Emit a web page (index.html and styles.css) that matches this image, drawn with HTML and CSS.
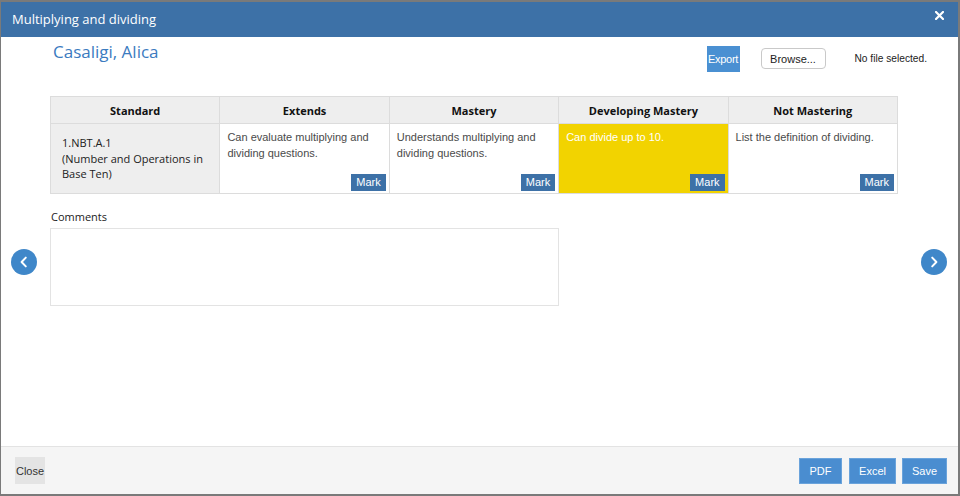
FILE: index.html
```html
<!DOCTYPE html>
<html lang="en">
<head>
<meta charset="utf-8">
<title>Multiplying and dividing</title>
<link rel="stylesheet" href="styles.css">
</head>
<body>
<div class="modal">
  <div class="modal-header">
    <span class="modal-title">Multiplying and dividing</span>
    <button class="close-x" aria-label="Close">
      <svg width="9" height="9" viewBox="0 0 9 9"><path d="M1 1 L8 8 M8 1 L1 8" stroke="#fff" stroke-width="2.2" stroke-linecap="square"/></svg>
    </button>
  </div>
  <div class="modal-body">
    <div class="top-row">
      <div class="student-name">Casaligi, Alica</div>
      <div class="spacer"></div>
      <button class="btn-export">Export</button>
      <button class="btn-browse">Browse...</button>
      <span class="file-label">No file selected.</span>
    </div>
    <table class="rubric">
      <thead>
        <tr>
          <th>Standard</th>
          <th>Extends</th>
          <th>Mastery</th>
          <th>Developing Mastery</th>
          <th>Not Mastering</th>
        </tr>
      </thead>
      <tbody>
        <tr>
          <td class="std-cell">1.NBT.A.1<br>(Number and Operations in<br>Base Ten)</td>
          <td class="level-cell"><div class="cell-inner"><span class="cell-text">Can evaluate multiplying and dividing questions.</span><button class="btn-mark">Mark</button></div></td>
          <td class="level-cell"><div class="cell-inner"><span class="cell-text">Understands multiplying and dividing questions.</span><button class="btn-mark">Mark</button></div></td>
          <td class="level-cell selected"><div class="cell-inner"><span class="cell-text">Can divide up to 10.</span><button class="btn-mark">Mark</button></div></td>
          <td class="level-cell"><div class="cell-inner"><span class="cell-text">List the definition of dividing.</span><button class="btn-mark">Mark</button></div></td>
        </tr>
      </tbody>
    </table>
    <div class="comments-label">Comments</div>
    <textarea class="comments-box"></textarea>
    <button class="nav-arrow nav-prev" aria-label="Previous">
      <svg width="26" height="26" viewBox="0 0 26 26"><circle cx="13" cy="13" r="13" fill="#3f87c9"/><path d="M14.8 8.6 L10.6 13 L14.8 17.4" fill="none" stroke="#fff" stroke-width="2" stroke-linecap="round" stroke-linejoin="round"/></svg>
    </button>
    <button class="nav-arrow nav-next" aria-label="Next">
      <svg width="26" height="26" viewBox="0 0 26 26"><circle cx="13" cy="13" r="13" fill="#3f87c9"/><path d="M11.2 8.6 L15.4 13 L11.2 17.4" fill="none" stroke="#fff" stroke-width="2" stroke-linecap="round" stroke-linejoin="round"/></svg>
    </button>
  </div>
  <div class="modal-footer">
    <button class="btn-close">Close</button>
    <div class="spacer"></div>
    <button class="btn-blue btn-pdf">PDF</button>
    <button class="btn-blue btn-excel">Excel</button>
    <button class="btn-blue btn-save">Save</button>
  </div>
</div>
</body>
</html>
```
FILE: styles.css
```css
html, body {
  margin: 0;
  padding: 0;
}
body {
  width: 960px;
  height: 496px;
  overflow: hidden;
  background: #7a7a7a;
  font-family: "Liberation Sans", Arial, sans-serif;
}
button {
  font-family: "Liberation Sans", Arial, sans-serif;
  cursor: pointer;
}
.modal {
  margin: 2px 2px 0 1px;
  height: 492px;
  background: #fff;
  display: flex;
  flex-direction: column;
}
.modal-header {
  height: 35px;
  flex: none;
  background: #3d71a7;
  display: flex;
  align-items: center;
  justify-content: space-between;
  padding: 0 14px 0 11px;
}
.modal-title {
  font-family: "Open Sans", sans-serif;
  font-size: 13px;
  color: #fff;
  margin-top: -2px;
}
.close-x {
  border: 0;
  background: none;
  padding: 0;
  width: 9px;
  height: 9px;
  align-self: flex-start;
  margin-top: 9px;
  display: flex;
}
.modal-body {
  flex: 1;
  position: relative;
  padding: 0 60px 0 49px;
}
.top-row {
  display: flex;
  align-items: flex-start;
  height: 59px;
  margin-right: -29px;
}
.spacer {
  flex: 1;
}
.student-name {
  font-family: "Open Sans", sans-serif;
  font-size: 17px;
  line-height: 22px;
  color: #3b7bbf;
  margin: 4px 0 0 3px;
}
.btn-export {
  margin-top: 9px;
  width: 33px;
  height: 26px;
  padding: 0;
  border: 0;
  background: #4a90d2;
  color: #fff;
  font-size: 11px;
  letter-spacing: -0.3px;
}
.btn-browse {
  margin: 11px 0 0 21px;
  width: 65px;
  height: 21px;
  padding: 0;
  border: 1px solid #c9c9c9;
  border-radius: 4px;
  background: #fff;
  color: #222;
  font-size: 11px;
}
.file-label {
  margin: 11px 0 0 29px;
  line-height: 21px;
  font-size: 10.2px;
  color: #222;
}
.rubric {
  width: 848px;
  table-layout: fixed;
  border-collapse: collapse;
}
.rubric th {
  height: 26px;
  padding: 0;
  background: #eee;
  border: 1px solid #dcdcdc;
  font-family: "Open Sans", sans-serif;
  font-size: 11px;
  font-weight: bold;
  color: #111;
  text-align: center;
}
.rubric td {
  border: 1px solid #dcdcdc;
  vertical-align: top;
}
.std-cell {
  background: #eee;
  font-family: "Open Sans", sans-serif;
  font-size: 11px;
  line-height: 15.5px;
  color: #222;
  padding: 0 4px 0 11px;
  vertical-align: middle !important;
  height: 69px;
}
.level-cell {
  padding: 5px 3px 1px 7px;
  background: #fff;
}
.level-cell.selected {
  background: #f2d300;
}
.cell-inner {
  height: 62px;
  display: flex;
  flex-direction: column;
}
.cell-text {
  font-size: 11px;
  line-height: 16px;
  color: #4a4a4a;
}
.selected .cell-text {
  color: #fff;
}
.btn-mark {
  margin-top: auto;
  align-self: flex-end;
  height: 17px;
  padding: 0 5px;
  border: 0;
  background: #3d71a7;
  color: #fff;
  font-size: 11px;
  line-height: 17px;
}
.comments-label {
  margin-top: 15px;
  font-family: "Open Sans", sans-serif;
  font-size: 11px;
  line-height: 16px;
  color: #222;
  padding-left: 1px;
}
.comments-box {
  display: block;
  margin: 3px 0 0 0;
  width: 509px;
  height: 78px;
  box-sizing: border-box;
  border: 1px solid #e3e3e3;
  resize: none;
  outline: none;
}
.nav-arrow {
  position: absolute;
  top: 212px;
  border: 0;
  padding: 0;
  background: none;
  width: 26px;
  height: 26px;
  display: flex;
}
.nav-prev {
  left: 10px;
}
.nav-next {
  right: 11px;
}
.modal-footer {
  height: 47px;
  flex: none;
  border-top: 1px solid #e3e3e3;
  background: #f5f5f5;
  display: flex;
  align-items: center;
  padding: 0 11px 0 14px;
}
.btn-close {
  width: 30px;
  height: 27px;
  padding: 0;
  border: 0;
  background: #e4e4e4;
  color: #333;
  font-size: 11px;
}
.btn-blue {
  height: 26px;
  padding: 0;
  margin-left: 6px;
  border: 1px solid #6aa3db;
  background: #4a8dd0;
  color: #fff;
  font-size: 11px;
}
.btn-pdf {
  width: 43px;
}
.btn-excel {
  width: 47px;
  margin-left: 7px;
}
.btn-save {
  width: 45px;
}
```
